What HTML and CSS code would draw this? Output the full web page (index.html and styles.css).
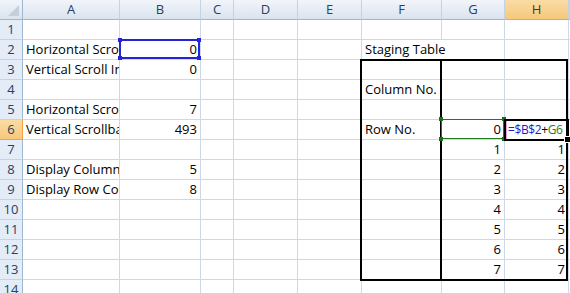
FILE: index.html
```html
<!DOCTYPE html>
<html lang="en">
<head>
  <meta charset="UTF-8" />
  <title>Staging Table</title>
  <link rel="stylesheet" href="styles.css">
</head>
<body>
  <div class="sheet">
    <div class="row head">
      <div class="corner"><span class="tri"></span></div>
      <div class="ch">A</div><div class="ch">B</div><div class="ch">C</div><div class="ch">D</div>
      <div class="ch">E</div><div class="ch">F</div><div class="ch">G</div><div class="ch sel">H</div><div class="ch"></div>
    </div>

    <div class="row">
      <div class="rh">1</div>
      <div class="c"></div><div class="c"></div><div class="c"></div><div class="c"></div>
      <div class="c"></div><div class="c"></div><div class="c"></div><div class="c"></div><div class="c"></div>
    </div>
    <div class="row">
      <div class="rh">2</div>
      <div class="c">Horizontal Scroll Increment</div><div class="c num">0</div><div class="c"></div><div class="c"></div>
      <div class="c"></div><div class="c span2">Staging Table</div><div class="c"></div><div class="c"></div>
    </div>
    <div class="row">
      <div class="rh">3</div>
      <div class="c">Vertical Scroll Increment</div><div class="c num">0</div><div class="c"></div><div class="c"></div>
      <div class="c"></div><div class="c"></div><div class="c"></div><div class="c"></div><div class="c"></div>
    </div>
    <div class="row">
      <div class="rh">4</div>
      <div class="c"></div><div class="c"></div><div class="c"></div><div class="c"></div>
      <div class="c"></div><div class="c">Column No.</div><div class="c"></div><div class="c"></div><div class="c"></div>
    </div>
    <div class="row">
      <div class="rh">5</div>
      <div class="c">Horizontal Scrollbar Max</div><div class="c num">7</div><div class="c"></div><div class="c"></div>
      <div class="c"></div><div class="c"></div><div class="c"></div><div class="c"></div><div class="c"></div>
    </div>
    <div class="row">
      <div class="rh sel">6</div>
      <div class="c">Vertical Scrollbar Max</div><div class="c num">493</div><div class="c"></div><div class="c"></div>
      <div class="c"></div><div class="c">Row No.</div><div class="c num">0</div>
      <div class="c editing"><span class="f-eq">=</span><span class="f-blue">$B$2</span>+<span class="f-green">G6</span></div>
      <div class="c"></div>
    </div>
    <div class="row">
      <div class="rh">7</div>
      <div class="c"></div><div class="c"></div><div class="c"></div><div class="c"></div>
      <div class="c"></div><div class="c"></div><div class="c num">1</div><div class="c num">1</div><div class="c"></div>
    </div>
    <div class="row">
      <div class="rh">8</div>
      <div class="c">Display Columns</div><div class="c num">5</div><div class="c"></div><div class="c"></div>
      <div class="c"></div><div class="c"></div><div class="c num">2</div><div class="c num">2</div><div class="c"></div>
    </div>
    <div class="row">
      <div class="rh">9</div>
      <div class="c">Display Row Count</div><div class="c num">8</div><div class="c"></div><div class="c"></div>
      <div class="c"></div><div class="c"></div><div class="c num">3</div><div class="c num">3</div><div class="c"></div>
    </div>
    <div class="row">
      <div class="rh">10</div>
      <div class="c"></div><div class="c"></div><div class="c"></div><div class="c"></div>
      <div class="c"></div><div class="c"></div><div class="c num">4</div><div class="c num">4</div><div class="c"></div>
    </div>
    <div class="row">
      <div class="rh">11</div>
      <div class="c"></div><div class="c"></div><div class="c"></div><div class="c"></div>
      <div class="c"></div><div class="c"></div><div class="c num">5</div><div class="c num">5</div><div class="c"></div>
    </div>
    <div class="row">
      <div class="rh">12</div>
      <div class="c"></div><div class="c"></div><div class="c"></div><div class="c"></div>
      <div class="c"></div><div class="c"></div><div class="c num">6</div><div class="c num">6</div><div class="c"></div>
    </div>
    <div class="row">
      <div class="rh">13</div>
      <div class="c"></div><div class="c"></div><div class="c"></div><div class="c"></div>
      <div class="c"></div><div class="c"></div><div class="c num">7</div><div class="c num">7</div><div class="c"></div>
    </div>
    <div class="row">
      <div class="rh">14</div>
      <div class="c"></div><div class="c"></div><div class="c"></div><div class="c"></div>
      <div class="c"></div><div class="c"></div><div class="c"></div><div class="c"></div><div class="c"></div>
    </div>

    <!-- borders and selections drawn on top of the cells -->
    <div class="overlay">
      <div class="table-box"></div>
      <div class="table-split"></div>
      <div class="ref-blue">
        <span class="hd tl"></span><span class="hd tr"></span><span class="hd bl"></span><span class="hd br"></span>
      </div>
      <div class="ref-green">
        <span class="hd tl"></span><span class="hd tr"></span><span class="hd bl"></span><span class="hd br"></span>
      </div>
      <div class="active"><span class="fill"></span></div>
    </div>
  </div>
</body>
</html>
```

FILE: styles.css
```css
html, body {
  margin: 0;
  padding: 0;
}
body {
  background: #fff;
  font-family: "Open Sans", "Noto Sans", sans-serif;
  font-size: 13px;
  color: #000;
  overflow: hidden;
}
.sheet {
  position: relative;
  width: 570px;
  height: 293px;
  overflow: hidden;
}
.row, .overlay {
  display: grid;
  grid-template-columns: 23px 97px 81px 33px 64px 64px 80px 63px 64px 1fr;
}
.row {
  height: 20px;
}
.c {
  border-right: 1px solid #d0d7e5;
  border-bottom: 1px solid #d0d7e5;
  line-height: 19px;
  padding: 0 3px;
  white-space: nowrap;
  overflow: hidden;
}
.num {
  text-align: right;
}
.span2 {
  grid-column: span 2;
  overflow: visible;
}

/* headers */
.corner, .ch {
  background: linear-gradient(#f1f5fa, #dae3ee);
  border-right: 1px solid #c5d2e3;
  border-bottom: 1px solid #9eb6ce;
  color: #27415f;
  text-align: center;
  line-height: 19px;
  overflow: hidden;
}
.corner {
  position: relative;
  border-right-color: #9eb6ce;
}
.tri {
  position: absolute;
  right: 3px;
  bottom: 3px;
  width: 0;
  height: 0;
  border-left: 11px solid transparent;
  border-bottom: 11px solid #c3cfdf;
}
.rh {
  background: #e4ecf7;
  border-right: 1px solid #9eb6ce;
  border-bottom: 1px solid #c5d2e3;
  color: #27415f;
  text-align: center;
  line-height: 19px;
}
.ch.sel, .rh.sel {
  background: linear-gradient(#fadca6, #f6c87a);
  border-bottom-color: #f2a443;
}
.rh.sel {
  border-right-color: #f2a443;
}

/* formula being edited */
.editing {
  padding-left: 3px;
  font-size: 12px;
  letter-spacing: -0.4px;
  overflow: visible;
}
.f-eq {
  color: #1c1cc8;
}
.f-blue {
  color: #1c1cc8;
}
.f-green {
  color: #1e7f1e;
}

/* overlay layer */
.overlay {
  position: absolute;
  left: 0;
  top: 0;
  width: 570px;
  grid-template-rows: repeat(15, 20px);
  pointer-events: none;
}
.table-box {
  grid-column: 7 / 10;
  grid-row: 4 / 15;
  margin: -1px 1px -1px -2px;
  border: 2px solid #000;
}
.table-split {
  grid-column: 8;
  grid-row: 4 / 15;
  margin-left: -2px;
  border-left: 2px solid #000;
}
.ref-blue, .ref-green {
  position: relative;
  margin: -1px 1px 1px -1px;
}
.ref-blue {
  grid-column: 3;
  grid-row: 3;
  border: 2px solid #2525d6;
}
.ref-green {
  grid-column: 8;
  grid-row: 7;
  border: 1px solid #1d7a1d;
}
.hd {
  position: absolute;
  width: 4px;
  height: 4px;
  background: #2525d6;
}
.ref-green .hd {
  background: #187018;
}
.tl { left: -3px; top: -3px; }
.tr { right: -3px; top: -3px; }
.bl { left: -3px; bottom: -3px; }
.br { right: -3px; bottom: -3px; }
.active {
  position: relative;
  grid-column: 9;
  grid-row: 7;
  margin: -1px 0 -1px -1px;
  border: 2px solid #000;
  box-shadow: inset 1px 0 0 #e9a3d8;
}
.fill {
  position: absolute;
  right: -4px;
  bottom: -4px;
  width: 5px;
  height: 5px;
  background: #000;
  border: 1px solid #fff;
}
```
